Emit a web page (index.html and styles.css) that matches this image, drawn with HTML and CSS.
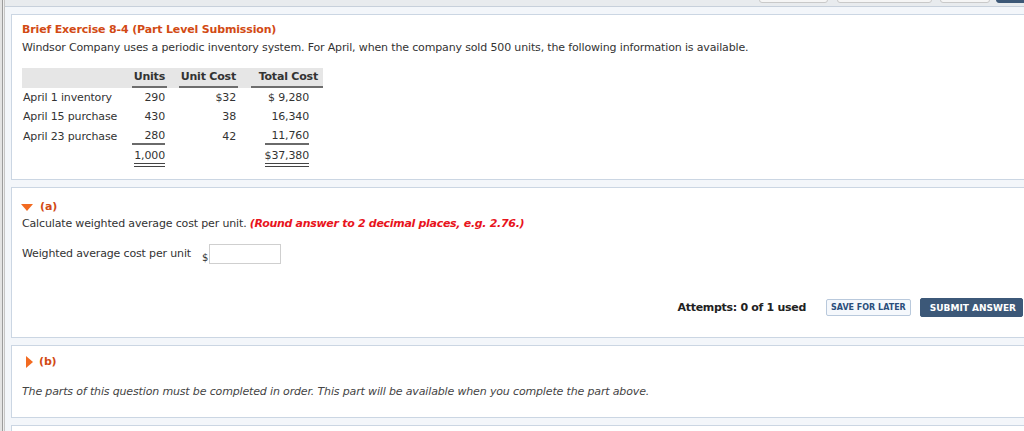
FILE: index.html
```html
<!DOCTYPE html>
<html lang="en">
<head>
    <meta charset="UTF-8">
    <meta name="viewport" content="width=device-width, initial-scale=1.0">
    <title>Brief Exercise 8-4</title>
    <link rel="stylesheet" href="styles.css">
</head>
<body>
<div class="frame">
    <div class="topbar">
        <span class="tb-btn tb-1"></span>
        <span class="tb-btn tb-2"></span>
        <span class="tb-btn tb-3"></span>
        <span class="tb-btn tb-dark"></span>
    </div>

    <div class="content">
        <section class="panel intro">
            <h2 class="title">Brief Exercise 8-4 (Part Level Submission)</h2>
            <p>Windsor Company uses a periodic inventory system. For April, when the company sold 500 units, the following information is available.</p>

            <table class="inv">
                <thead>
                    <tr>
                        <th class="c-label"></th>
                        <th class="c-units"><span>Units</span></th>
                        <th class="c-cost"><span>Unit Cost</span></th>
                        <th class="c-total"><span>Total Cost</span></th>
                    </tr>
                </thead>
                <tbody>
                    <tr>
                        <td class="c-label">April 1 inventory</td>
                        <td class="c-units">290</td>
                        <td class="c-cost">$32</td>
                        <td class="c-total">$ 9,280</td>
                    </tr>
                    <tr>
                        <td class="c-label">April 15 purchase</td>
                        <td class="c-units">430</td>
                        <td class="c-cost">38</td>
                        <td class="c-total">16,340</td>
                    </tr>
                    <tr class="sub-row">
                        <td class="c-label">April 23 purchase</td>
                        <td class="c-units"><span class="ul ul-units">280</span></td>
                        <td class="c-cost">42</td>
                        <td class="c-total"><span class="ul ul-total">11,760</span></td>
                    </tr>
                    <tr class="sum-row">
                        <td class="c-label"></td>
                        <td class="c-units"><span class="dbl">1,000</span></td>
                        <td class="c-cost"></td>
                        <td class="c-total"><span class="dbl">$37,380</span></td>
                    </tr>
                </tbody>
            </table>
        </section>

        <section class="panel part">
            <div class="part-head"><span class="tri tri-down"></span>(a)</div>
            <p>Calculate weighted average cost per unit. <em class="hint">(Round answer to 2 decimal places, e.g. 2.76.)</em></p>

            <div class="answer-row">
                <label for="wac">Weighted average cost per unit</label>
                <span class="dollar">$</span>
                <input id="wac" type="text">
            </div>

            <div class="actions">
                <span class="attempts">Attempts: 0 of 1 used</span>
                <button class="btn-save">SAVE FOR LATER</button>
                <button class="btn-submit">SUBMIT ANSWER</button>
            </div>
        </section>

        <section class="panel part locked">
            <div class="part-head"><span class="tri tri-right"></span>(b)</div>
            <p class="note">The parts of this question must be completed in order. This part will be available when you complete the part above.</p>
        </section>

        <section class="panel next"></section>
    </div>
</div>
</body>
</html>
```

FILE: styles.css
```css
body {
    margin: 0;
    background: #f3f6fa;
    font-family: "DejaVu Sans", Verdana, sans-serif;
    font-size: 11px;
    line-height: 14px;
    letter-spacing: -0.15px;
    color: #333;
    overflow: hidden;
}
.frame {
    padding-left: 5px;
    min-height: 100vh;
    box-shadow: inset 2px 0 #e3e3e3, inset 3px 0 #9c9c9c, inset 4px 0 #eeeeee, inset 5px 0 #c6c6c6;
}
.topbar {
    display: flex;
    justify-content: flex-end;
    align-items: flex-end;
    height: 3px;
    padding-bottom: 3px;
    background: #e8ebee;
    border-bottom: 1px solid #c7d0db;
    overflow: hidden;
}
.tb-btn {
    flex: none;
    height: 20px;
    border: 1px solid #c9c9c9;
    border-radius: 3px;
    background: #f5f5f5;
}
.tb-1 { width: 67px; margin-right: 9px; }
.tb-2 { width: 93px; margin-right: 8px; }
.tb-3 { width: 48px; margin-right: 6px; }
.tb-dark {
    width: 42px;
    margin-right: -16px;
    background: #3d5877;
    border-color: #3d5877;
}
.content {
    padding: 7px 0 0 6px;
}
.panel {
    background: #fff;
    border: 1px solid #cbd6e3;
    margin: 0 -30px 7px 0;
    padding: 8px 30px 13px 10px;
}
.title {
    margin: 0 0 4px;
    font-size: 11px;
    font-weight: bold;
    color: #d24a14;
}
p {
    margin: 0;
}
.inv {
    margin-top: 13px;
    border-collapse: collapse;
    border-spacing: 0;
}
.inv thead tr {
    background: #e6e6e6;
}
.inv th,
.inv td {
    box-sizing: border-box;
    padding: 0;
    text-align: right;
}
.inv th {
    height: 20px;
    vertical-align: bottom;
    font-weight: bold;
    letter-spacing: -0.2px;
}
.inv th span {
    display: block;
    line-height: 18px;
    border-bottom: 2px solid #6e6e6e;
}
.inv th.c-units { padding: 0 5px; }
.inv th.c-units span { padding-right: 2px; }
.inv th.c-cost { padding: 0 7px; }
.inv th.c-cost span { padding-right: 2px; }
.inv th.c-total { padding: 0 0 0 6px; }
.inv th.c-total span { padding-right: 5px; }
.inv td {
    height: 19px;
    vertical-align: middle;
}
.inv .c-label {
    width: 105px;
    padding-left: 1px;
    text-align: left;
}
.inv .c-units { width: 45px; }
.inv .c-cost { width: 73px; }
.inv .c-total { width: 78px; }
.inv td.c-units { padding-right: 7px; }
.inv td.c-cost { padding-right: 9px; }
.inv td.c-total { padding-right: 14px; }
.inv .sub-row td {
    height: 20px;
    padding-top: 2px;
}
.inv .sum-row td {
    height: 21px;
    padding-top: 3px;
    vertical-align: top;
}
.ul {
    display: inline-block;
    border-bottom: 2px solid #6a6a6a;
}
.ul-units { min-width: 33px; }
.ul-total { min-width: 44px; }
.dbl {
    display: inline-block;
    border-bottom: 4px double #444;
}
.intro {
    padding-bottom: 12px;
}
.part {
    padding-top: 12px;
    padding-bottom: 20px;
}
.part-head {
    display: flex;
    align-items: center;
    margin-bottom: 3px;
    font-weight: bold;
    color: #d24a14;
}
.tri {
    display: inline-block;
    width: 0;
    height: 0;
    margin-right: 7px;
}
.tri-down {
    margin-left: -1px;
    border-left: 6px solid transparent;
    border-right: 6px solid transparent;
    border-top: 7px solid #f26a21;
}
.tri-right {
    margin-left: 4px;
    margin-right: 6px;
    border-top: 6px solid transparent;
    border-bottom: 6px solid transparent;
    border-left: 7px solid #f26a21;
}
.hint {
    font-weight: bold;
    letter-spacing: -0.3px;
    color: #e8141c;
}
.answer-row {
    display: flex;
    align-items: center;
    margin-top: 12px;
}
.dollar {
    margin: 8px 1px 0 11px;
    font-size: 10px;
}
.answer-row input {
    box-sizing: border-box;
    width: 72px;
    height: 20px;
    padding: 0 2px;
    border: 1px solid #cfcfcf;
    font: inherit;
}
.actions {
    display: flex;
    justify-content: flex-end;
    align-items: center;
    margin-top: 33px;
}
.attempts {
    margin-right: 20px;
    font-weight: bold;
    letter-spacing: -0.3px;
    color: #222;
}
.actions button {
    font-family: "DejaVu Sans", Verdana, sans-serif;
    font-weight: bold;
    cursor: pointer;
}
.btn-save {
    height: 17px;
    padding: 0 4px;
    margin-right: 9px;
    border: 1px solid #b9c9dc;
    border-radius: 2px;
    background: #f5f8fc;
    color: #2b4e7b;
    font-size: 8px;
}
.btn-submit {
    height: 19px;
    padding: 0 6px 0 9px;
    border: 1px solid #3c5878;
    border-radius: 2px;
    background: #3c5878;
    color: #fff;
    font-size: 9px;
}
.locked {
    padding-top: 9px;
    padding-bottom: 18px;
}
.note {
    margin-top: 16px;
    font-style: italic;
    color: #444;
}
.next {
    height: 40px;
}
```
